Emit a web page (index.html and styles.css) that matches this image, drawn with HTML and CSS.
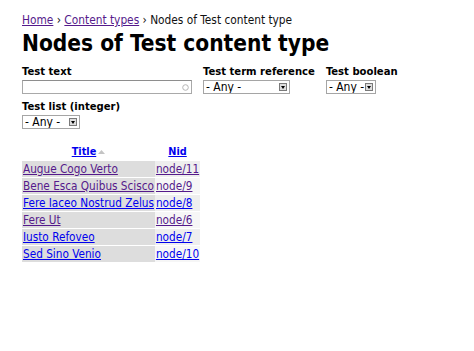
FILE: index.html
```html
<!DOCTYPE html>
<html lang="en">
<head>
<meta charset="utf-8">
<title>Nodes of Test content type</title>
<link rel="stylesheet" href="styles.css">
</head>
<body>
<div class="page">
  <nav class="breadcrumb"><a class="visited" href="#">Home</a> › <a class="visited" href="#">Content types</a> › Nodes of Test content type</nav>
  <h1 class="title">Nodes of Test content type</h1>

  <form class="filters">
    <div class="filter filter-text">
      <label class="filter-label" for="f-text">Test text</label>
      <div class="textbox">
        <input id="f-text" type="text" class="textbox-input">
        <svg class="throbber" width="7" height="7" viewBox="0 0 7 7"><circle cx="3.5" cy="3.5" r="2.8" fill="none" stroke="#b4b4b4" stroke-width="1"/></svg>
      </div>
    </div>
    <div class="filter">
      <label class="filter-label" for="f-term">Test term reference</label>
      <div class="select select-term">
        <select id="f-term" class="select-input"><option>- Any -</option></select>
        <span class="select-arrow"><svg width="4" height="3" viewBox="0 0 4 3"><path d="M0 0H4L2 3Z" fill="#000"/></svg></span>
      </div>
    </div>
    <div class="filter">
      <label class="filter-label" for="f-bool">Test boolean</label>
      <div class="select select-bool">
        <select id="f-bool" class="select-input"><option>- Any -</option></select>
        <span class="select-arrow"><svg width="4" height="3" viewBox="0 0 4 3"><path d="M0 0H4L2 3Z" fill="#000"/></svg></span>
      </div>
    </div>
    <div class="filter">
      <label class="filter-label" for="f-list">Test list (integer)</label>
      <div class="select select-list">
        <select id="f-list" class="select-input"><option>- Any -</option></select>
        <span class="select-arrow"><svg width="4" height="3" viewBox="0 0 4 3"><path d="M0 0H4L2 3Z" fill="#000"/></svg></span>
      </div>
    </div>
  </form>

  <table class="results">
    <thead>
      <tr>
        <th class="col-title"><a href="#">Title</a><svg class="sort-icon" width="7" height="4" viewBox="0 0 7 4"><path d="M0 4H7L3.5 0Z" fill="#c4c4c4"/></svg></th>
        <th class="col-nid"><a href="#">Nid</a></th>
      </tr>
    </thead>
    <tbody>
      <tr class="odd"><td class="active"><a class="visited" href="#">Augue Cogo Verto</a></td><td><a class="visited" href="#">node/11</a></td></tr>
      <tr class="even"><td class="active"><a class="visited" href="#">Bene Esca Quibus Scisco</a></td><td><a class="visited" href="#">node/9</a></td></tr>
      <tr class="odd"><td class="active"><a href="#">Fere Iaceo Nostrud Zelus</a></td><td><a href="#">node/8</a></td></tr>
      <tr class="even"><td class="active"><a class="visited" href="#">Fere Ut</a></td><td><a class="visited" href="#">node/6</a></td></tr>
      <tr class="odd"><td class="active"><a href="#">Iusto Refoveo</a></td><td><a href="#">node/7</a></td></tr>
      <tr class="even"><td class="active"><a href="#">Sed Sino Venio</a></td><td><a href="#">node/10</a></td></tr>
    </tbody>
  </table>
</div>
</body>
</html>
```
FILE: styles.css
```css
html, body {
  margin: 0;
  background: #fff;
}
body {
  font-family: "DejaVu Sans Condensed", "DejaVu Sans", sans-serif;
  color: #000;
}
a {
  color: #0000ee;
  text-decoration: underline;
}
a.visited {
  color: #551a8b;
}
.page {
  padding: 13px 22px 0;
}
.breadcrumb {
  font-size: 11.8px;
  line-height: 14px;
  color: #111;
}
.title {
  margin: 2px 0 0;
  font-size: 22.5px;
  line-height: 28px;
  font-weight: bold;
  color: #000;
}
.filters {
  margin: 8px 0 0;
  display: flex;
  flex-wrap: wrap;
  column-gap: 11px;
  row-gap: 6px;
  max-width: 420px;
}
.filter {
  display: flex;
  flex-direction: column;
  align-items: flex-start;
  gap: 2px;
}
.filter-label {
  font-size: 11.2px;
  line-height: 13px;
  font-weight: bold;
  white-space: nowrap;
}
.textbox {
  width: 170px;
  height: 14px;
  box-sizing: border-box;
  display: flex;
  align-items: center;
  border: 1px solid #a9a9a9;
  border-top-color: #8e8e8e;
  background: #fff;
}
.textbox-input {
  flex: 1;
  min-width: 0;
  height: 12px;
  border: 0;
  padding: 0 2px;
  margin: 0;
  outline: none;
  font: 12px "DejaVu Sans Condensed", sans-serif;
  background: transparent;
}
.throbber {
  margin-right: 2px;
  flex: none;
}
.select {
  height: 14px;
  box-sizing: border-box;
  display: flex;
  align-items: center;
  border: 1px solid #a5a5a5;
  background: #fff;
}
.select-term { width: 87px; }
.select-bool { width: 50px; }
.select-list { width: 58px; }
.select-input {
  appearance: none;
  -webkit-appearance: none;
  flex: 1;
  min-width: 0;
  height: 12px;
  margin: 0;
  padding: 0 0 0 2px;
  border: 0;
  outline: none;
  background: transparent;
  font: 12px/12px "DejaVu Sans Condensed", sans-serif;
  color: #000;
}
.select-arrow {
  flex: none;
  width: 8px;
  height: 8px;
  margin-right: 2px;
  box-sizing: border-box;
  border: 1px solid #7a7a7a;
  background: #dedede;
  display: flex;
  align-items: center;
  justify-content: center;
}
.results {
  margin-top: 15px;
  border-collapse: collapse;
  border-spacing: 0;
}
.results th {
  font-size: 10.8px;
  line-height: 14px;
  font-weight: bold;
  text-align: center;
  padding: 1px 1px 2px;
  white-space: nowrap;
}
.sort-icon {
  margin-left: 2px;
  vertical-align: 1px;
}
.results td {
  font-size: 11.7px;
  line-height: 14px;
  padding: 1px 1px;
  white-space: nowrap;
  border-bottom: 1px solid #fff;
}
.results tr.odd td {
  background: #eeeeee;
}
.results tr.even td {
  background: #f6f6f6;
}
.results td.active,
.results tr td.active {
  background: #dddddd;
}
```
